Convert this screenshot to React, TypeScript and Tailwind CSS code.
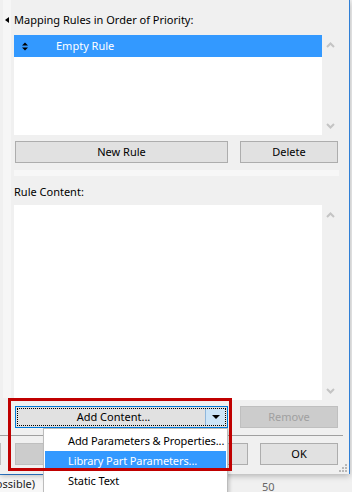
import React from "react";

const font = { fontFamily: '"Noto Sans", "Segoe UI", sans-serif' };

function ChevronUp() {
  return (
    <svg width="9" height="6" viewBox="0 0 9 6" className="block">
      <polyline points="1,5 4.5,1.5 8,5" fill="none" stroke="#c4c4c4" strokeWidth="2" />
    </svg>
  );
}

function ChevronDown() {
  return (
    <svg width="9" height="6" viewBox="0 0 9 6" className="block">
      <polyline points="1,1 4.5,4.5 8,1" fill="none" stroke="#c4c4c4" strokeWidth="2" />
    </svg>
  );
}

function SortArrows() {
  return (
    <svg width="6" height="9" viewBox="0 0 6 9" className="block">
      <polygon points="0,3.5 3,0.5 6,3.5" fill="#000" />
      <polygon points="0,5.5 3,8.5 6,5.5" fill="#000" />
    </svg>
  );
}

function Btn({ label, w, disabled }: { label?: string; w: string; disabled?: boolean }) {
  return (
    <div
      className={`${w} h-[22px] flex items-center justify-center border text-[11px] whitespace-nowrap ${
        disabled
          ? "bg-[#cccccc] border-[#bfbfbf] text-[#a0a0a0]"
          : "bg-[#e1e1e1] border-[#adadad] text-black"
      }`}
    >
      {label}
    </div>
  );
}

function ScrollCol({ h }: { h: string }) {
  return (
    <div className={`w-[16px] ${h} flex flex-col items-center justify-between pt-[7px] pb-[6px]`}>
      <ChevronUp />
      <ChevronDown />
    </div>
  );
}

export default function App() {
  return (
    <div className="relative w-[352px] h-[492px] overflow-hidden bg-[#f0f0f0] text-black" style={font}>
      {/* dialog */}
      <div className="relative w-[350px] h-[474px] flex bg-[#f0f0f0] border-r border-[#2f7fd6] shadow-[0_2px_6px_rgba(0,0,0,0.25)]">
        <div className="w-[14px] flex flex-col">
          <div className="ml-[3px] w-[8px] h-[398px] bg-[#f6f6f6]" />
        </div>
        <div className="flex flex-col w-[335px]">
          {/* header */}
          <div className="relative h-[35px] flex items-center pt-[5px] text-[11px] whitespace-nowrap">
            <span className="absolute left-[-9px] top-[17px] w-0 h-0 border-y-[3.5px] border-y-transparent border-r-[4px] border-r-black" />
            Mapping Rules in Order of Priority:
          </div>
          {/* rules list */}
          <div className="flex">
            <div className="w-[308px] h-[100px] bg-white">
              <div className="h-[22px] bg-[#3399ff] flex items-center text-white text-[11px]">
                <div className="w-[42px] pl-[8px]">
                  <SortArrows />
                </div>
                Empty Rule
              </div>
            </div>
            <ScrollCol h="h-[100px]" />
          </div>
          <div className="flex mt-[6px] pl-[1px]">
            <Btn label="New Rule" w="w-[213px]" />
            <div className="w-[12px]" />
            <Btn label="Delete" w="w-[98px]" />
          </div>
          <div className="mt-[7px] h-[6px] w-[325px] bg-[#f7f7f7]" />
          <div className="h-[29px] flex items-center pt-[3px] text-[11px]">Rule Content:</div>
          {/* rule content */}
          <div className="flex">
            <div className="w-[308px] h-[195px] bg-white" />
            <ScrollCol h="h-[195px]" />
          </div>
          <div className="flex mt-[6px] pl-[1px]">
            <div className="w-[213px] h-[22px] border border-[#0078d7] bg-[#e1e1e1] p-[1px]">
              <div className="h-full flex border border-dotted border-black text-[11px]">
                <div className="flex-1 flex items-center justify-center pl-[4px] whitespace-nowrap">Add Content...</div>
                <div className="w-[20px] bg-[#cce4f7] border-l border-[#8fb7dc] flex items-center justify-center">
                  <span className="w-0 h-0 border-x-[4px] border-x-transparent border-t-[4px] border-t-black" />
                </div>
              </div>
            </div>
            <div className="w-[12px]" />
            <Btn label="Remove" w="w-[98px]" disabled />
          </div>
        </div>
        {/* separator + bottom buttons */}
        <div className="absolute left-0 top-[435px] w-[343px] h-px bg-[#a0a0a0]" />
        <div className="absolute left-0 top-[443px] w-[1px] h-[22px] bg-[#bdbdbd]" />
        <div className="absolute left-[15px] top-[443px] w-[323px] flex">
          <div className="w-[105px] h-[22px] bg-[#cccccc] border border-[#bfbfbf]" />
          <div className="w-[8px]" />
          <Btn w="w-[120px]" />
          <div className="w-[12px]" />
          <Btn label="OK" w="w-[78px]" />
        </div>
        {/* resize grip */}
        <svg className="absolute right-[2px] bottom-[2px]" width="8" height="8" viewBox="0 0 8 8">
          <rect x="6" y="0" width="2" height="2" fill="#b8b8b8" />
          <rect x="3" y="3" width="2" height="2" fill="#b8b8b8" />
          <rect x="6" y="3" width="2" height="2" fill="#b8b8b8" />
          <rect x="0" y="6" width="2" height="2" fill="#b8b8b8" />
          <rect x="3" y="6" width="2" height="2" fill="#b8b8b8" />
          <rect x="6" y="6" width="2" height="2" fill="#b8b8b8" />
        </svg>
      </div>

      {/* behind dialog */}
      <div className="flex h-[18px] text-[11px] leading-none">
        <div className="w-[43px] border-t border-[#2f7fd6] bg-[#f7f7f7] overflow-hidden whitespace-nowrap flex items-center justify-end pr-[8px] text-[#222]">
          ossible)
        </div>
        <div className="flex-1 flex items-center pl-[219px] text-[#666] pt-[6px]">50</div>
      </div>

      {/* dropdown menu */}
      <div className="absolute left-[43px] top-[428px] w-[185px] h-[70px] bg-white border border-[#bcbcbc] shadow-[2px_2px_3px_rgba(0,0,0,0.15)] text-[11px] tracking-[-0.1px] py-[2px] px-[1px] whitespace-nowrap">
        <div className="h-[20px] flex items-center pl-[23px]">Add Parameters &amp; Properties...</div>
        <div className="h-[20px] flex items-center pl-[23px] bg-[#3399ff] text-white">Library Part Parameters...</div>
        <div className="h-[20px] flex items-center pl-[23px]">Static Text</div>
      </div>

      {/* annotation */}
      <div className="absolute left-[8px] top-[398px] w-[224px] h-[73px] border-[3px] border-[#c00000]" />
    </div>
  );
}
